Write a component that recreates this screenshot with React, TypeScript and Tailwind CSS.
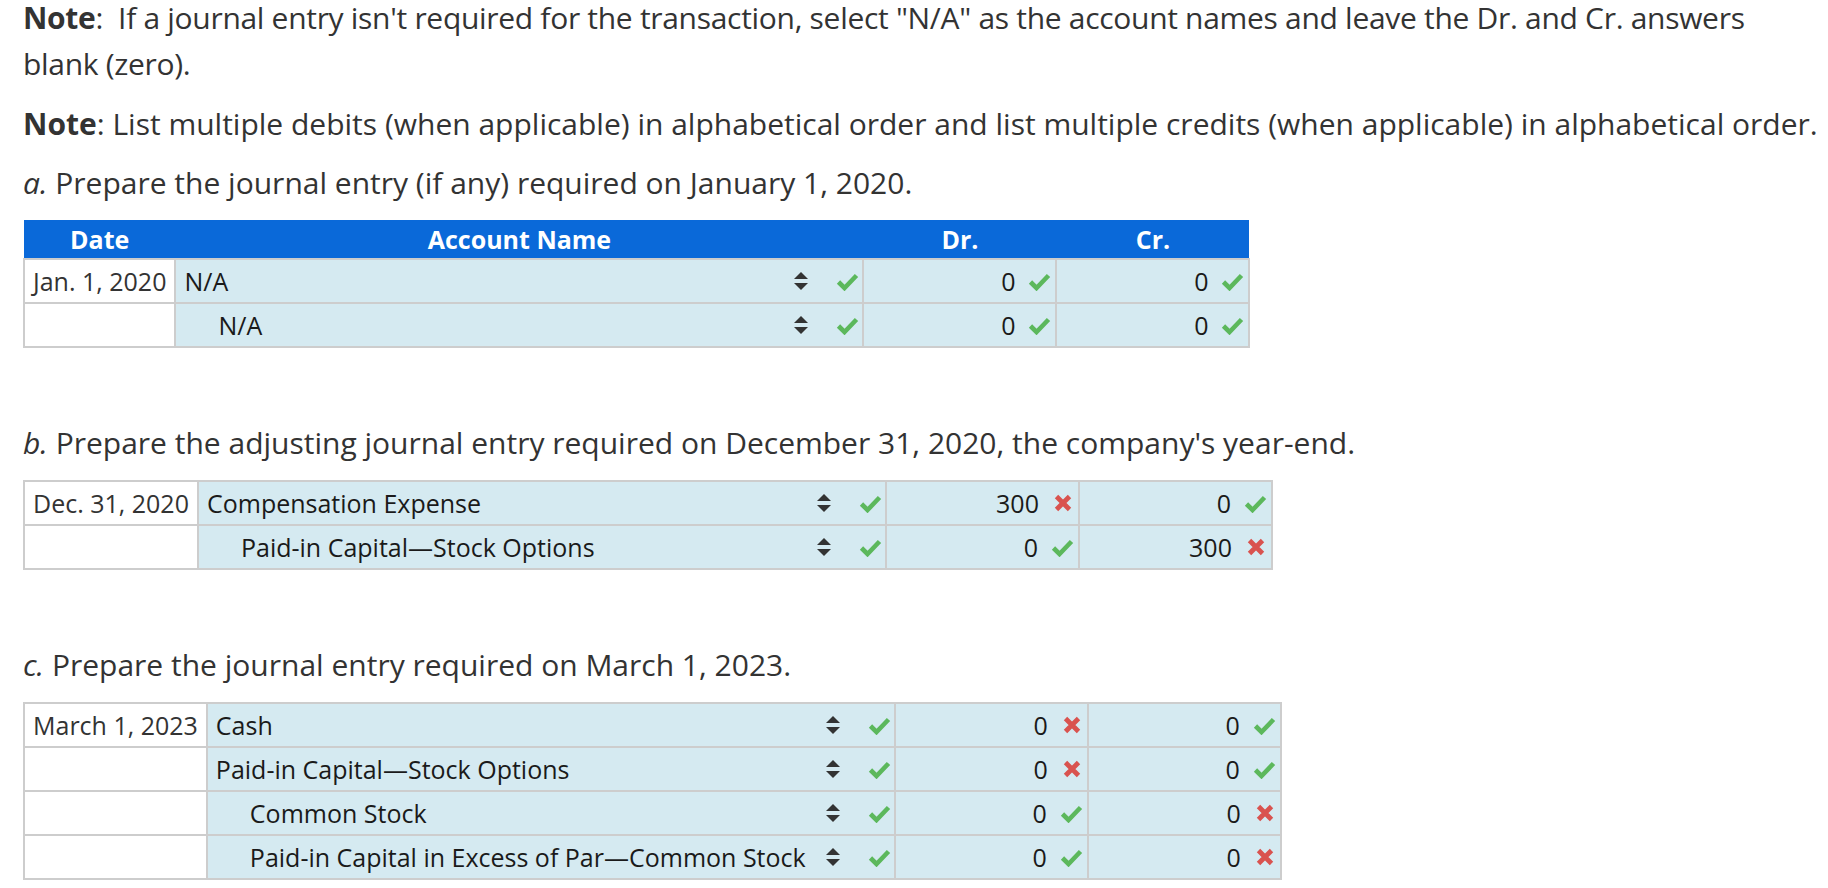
import React from 'react'

type Mark = 'ok' | 'bad'

interface Row {
  date?: string
  account: string
  credit?: boolean
  accountMark: Mark
  dr: string
  drMark: Mark
  cr: string
  crMark: Mark
}

function Check() {
  return (
    <svg width="23" height="19" viewBox="0 0 23 19" className="shrink-0">
      <path d="M2.5 10 L8.5 16 L20.5 3.5" fill="none" stroke="#5cb85c" strokeWidth="4.6" strokeLinejoin="miter" />
    </svg>
  )
}

function Cross() {
  return (
    <svg width="22" height="18" viewBox="0 0 22 18" className="shrink-0">
      <path d="M4.5 2.5 L17.5 15.5 M17.5 2.5 L4.5 15.5" fill="none" stroke="#d9534f" strokeWidth="4.8" />
    </svg>
  )
}

function SortArrows() {
  return (
    <svg width="16" height="20" viewBox="0 0 16 20" className="shrink-0">
      <path d="M8 1 L15 8 L1 8 Z" fill="#333" />
      <path d="M1 12 L15 12 L8 19 Z" fill="#333" />
    </svg>
  )
}

function MarkIcon({ mark }: { mark: Mark }) {
  return mark === 'ok' ? <Check /> : <Cross />
}

function JournalTable({ rows, header = false }: { rows: Row[]; header?: boolean }) {
  return (
    <table className="border-collapse text-[25px] leading-[30px]">
      {header && (
        <thead>
          <tr className="h-[39px] bg-[#0a69d9] text-white font-bold text-[25px]">
            <th className="px-[8px] text-center font-bold">Date</th>
            <th className="text-center font-bold">Account Name</th>
            <th className="text-center font-bold">Dr.</th>
            <th className="text-center font-bold">Cr.</th>
          </tr>
        </thead>
      )}
      <tbody>
        {rows.map((r, i) => (
          <tr key={i} className="h-[44px]">
            <td className="border-2 border-[#cdcdcd] bg-white px-[8px] whitespace-nowrap text-[#333]">
              {r.date ?? ''}
            </td>
            <td className="w-[688px] border-2 border-[#cdcdcd] bg-[#d5eaf1] p-0">
              <div className={`flex items-center pr-[3px] ${r.credit ? 'pl-[42px]' : 'pl-[8px]'}`}>
                <span className="flex-1 text-[#1a1a1a] whitespace-nowrap">{r.account}</span>
                <SortArrows />
                <span className="w-[27px]" />
                <MarkIcon mark={r.accountMark} />
              </div>
            </td>
            <td className="w-[193px] border-2 border-[#cdcdcd] bg-[#d5eaf1] p-0">
              <div className="flex items-center justify-end gap-[13px] pr-[4px] text-[#1a1a1a]">
                <span>{r.dr}</span>
                <MarkIcon mark={r.drMark} />
              </div>
            </td>
            <td className="w-[193px] border-2 border-[#cdcdcd] bg-[#d5eaf1] p-0">
              <div className="flex items-center justify-end gap-[13px] pr-[4px] text-[#1a1a1a]">
                <span>{r.cr}</span>
                <MarkIcon mark={r.crMark} />
              </div>
            </td>
          </tr>
        ))}
      </tbody>
    </table>
  )
}

const tableA: Row[] = [
  { date: 'Jan. 1, 2020', account: 'N/A', accountMark: 'ok', dr: '0', drMark: 'ok', cr: '0', crMark: 'ok' },
  { account: 'N/A', credit: true, accountMark: 'ok', dr: '0', drMark: 'ok', cr: '0', crMark: 'ok' },
]

const tableB: Row[] = [
  { date: 'Dec. 31, 2020', account: 'Compensation Expense', accountMark: 'ok', dr: '300', drMark: 'bad', cr: '0', crMark: 'ok' },
  { account: 'Paid-in Capital\u2014Stock Options', credit: true, accountMark: 'ok', dr: '0', drMark: 'ok', cr: '300', crMark: 'bad' },
]

const tableC: Row[] = [
  { date: 'March 1, 2023', account: 'Cash', accountMark: 'ok', dr: '0', drMark: 'bad', cr: '0', crMark: 'ok' },
  { account: 'Paid-in Capital\u2014Stock Options', accountMark: 'ok', dr: '0', drMark: 'bad', cr: '0', crMark: 'ok' },
  { account: 'Common Stock', credit: true, accountMark: 'ok', dr: '0', drMark: 'ok', cr: '0', crMark: 'bad' },
  { account: 'Paid-in Capital in Excess of Par\u2014Common Stock', credit: true, accountMark: 'ok', dr: '0', drMark: 'ok', cr: '0', crMark: 'bad' },
]

export default function App() {
  return (
    <div className="min-h-screen bg-white overflow-hidden">
      <div
        className="mt-[-5px] pl-[23px] pr-[10px] text-[30px] leading-[46px] text-[#333]"
        style={{ fontFamily: '"Open Sans", "Noto Sans", sans-serif' }}
      >
        <p className="mb-[14px] tracking-[-0.3px]">
          <strong className="font-bold">Note</strong>:&nbsp; If a journal entry isn't required for the transaction, select "N/A" as the account names and leave the Dr. and Cr. answers blank (zero).
        </p>
        <p className="mb-[13px] whitespace-nowrap">
          <strong className="font-bold">Note</strong>: List multiple debits (when applicable) in alphabetical order and list multiple credits (when applicable) in alphabetical order.
        </p>
        <p className="mb-[14px]">
          <em>a.</em> Prepare the journal entry (if any) required on January 1, 2020.
        </p>
        <JournalTable rows={tableA} header />

        <p className="mt-[72px] mb-[14px]">
          <em>b.</em> Prepare the adjusting journal entry required on December 31, 2020, the company's year-end.
        </p>
        <JournalTable rows={tableB} />

        <p className="mt-[72px] mb-[14px]">
          <em>c.</em> Prepare the journal entry required on March 1, 2023.
        </p>
        <JournalTable rows={tableC} />
      </div>
    </div>
  )
}
